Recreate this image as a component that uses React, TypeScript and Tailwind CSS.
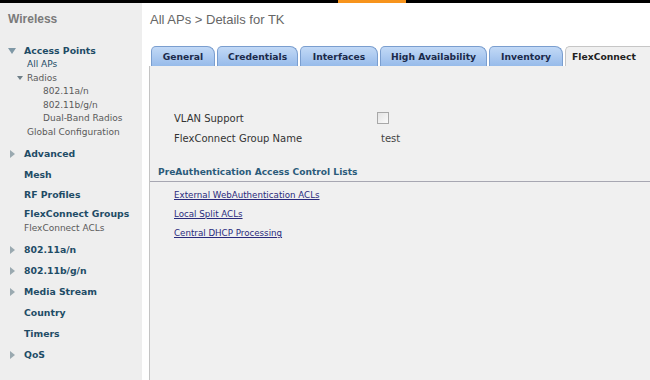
import { ReactNode } from "react"

const verdana = { fontFamily: '"DejaVu Sans", Verdana, sans-serif' }
const arial = { fontFamily: '"Liberation Sans", Arial, sans-serif' }

function Down({ small }: { small?: boolean }) {
  return small ? (
    <svg width="6" height="4" viewBox="0 0 6 4" className="shrink-0">
      <path d="M0 0 H6 L3 4 Z" fill="#6f7f88" />
    </svg>
  ) : (
    <svg width="8" height="6" viewBox="0 0 8 6" className="shrink-0">
      <path d="M0 0 H8 L4 6 Z" fill="#7f98a6" />
    </svg>
  )
}

function Right() {
  return (
    <svg width="5" height="8" viewBox="0 0 5 8" className="shrink-0">
      <path d="M0 0 L5 4 L0 8 Z" fill="#9aa9b0" />
    </svg>
  )
}

function NavBold({ children, arrow, h }: { children: ReactNode; arrow?: boolean; h: string }) {
  return (
    <div className={`flex items-center ${h}`}>
      <div className="flex w-[24px] justify-start pl-[10px]">{arrow && <Right />}</div>
      <span className="text-[9.3px] font-bold text-[#1e4c66]">{children}</span>
    </div>
  )
}

function NavSmall({ children, pl, color = "text-[#5a5a5a]" }: { children: ReactNode; pl: string; color?: string }) {
  return (
    <div className={`flex h-[13.5px] items-center ${pl}`}>
      <span className={`text-[9px] ${color}`}>{children}</span>
    </div>
  )
}

function Sidebar() {
  return (
    <aside className="flex w-[142px] shrink-0 flex-col bg-[#eeeeee] pt-[6px]" style={verdana}>
      <div className="flex h-[20px] items-center pl-[8px]">
        <span className="text-[12px] font-bold text-[#7a7a7a]" style={arial}>
          Wireless
        </span>
      </div>
      <div className="mt-[15px] flex h-[14px] items-center">
        <div className="flex w-[24px] pl-[8px]">
          <Down />
        </div>
        <span className="text-[9.3px] font-bold text-[#1e4c66]">Access Points</span>
      </div>
      <NavSmall pl="pl-[27px]" color="text-[#1e4c66]">
        All APs
      </NavSmall>
      <div className="flex h-[13.5px] items-center pl-[17px]">
        <Down small />
        <span className="ml-[4px] text-[9px] text-[#5a5a5a]">Radios</span>
      </div>
      <NavSmall pl="pl-[43px]">802.11a/n</NavSmall>
      <NavSmall pl="pl-[43px]">802.11b/g/n</NavSmall>
      <NavSmall pl="pl-[43px]">Dual-Band Radios</NavSmall>
      <NavSmall pl="pl-[27px]">Global Configuration</NavSmall>

      <div className="mt-[5px]" />
      <NavBold arrow h="h-[20.5px]">Advanced</NavBold>
      <NavBold h="h-[20.5px]">Mesh</NavBold>
      <NavBold h="h-[20.5px]">RF Profiles</NavBold>
      <NavBold h="h-[17.5px]">FlexConnect Groups</NavBold>
      <div className="flex h-[12px] items-center pl-[24px]">
        <span className="text-[9px] text-[#5a5a5a]">FlexConnect ACLs</span>
      </div>
      <div className="mt-[4px]" />
      <NavBold arrow h="h-[21px]">802.11a/n</NavBold>
      <NavBold arrow h="h-[21px]">802.11b/g/n</NavBold>
      <NavBold arrow h="h-[21px]">Media Stream</NavBold>
      <NavBold h="h-[21px]">Country</NavBold>
      <NavBold h="h-[21px]">Timers</NavBold>
      <NavBold arrow h="h-[21px]">QoS</NavBold>
    </aside>
  )
}

const tabs = [
  { label: "General", w: "w-[64px]" },
  { label: "Credentials", w: "w-[81px]" },
  { label: "Interfaces", w: "w-[78px]" },
  { label: "High Availability", w: "w-[107px]" },
  { label: "Inventory", w: "w-[74px]" },
]

function Tabs() {
  return (
    <div className="flex h-[20px] items-end gap-[2px] pl-[9px]" style={verdana}>
      {tabs.map((t) => (
        <div
          key={t.label}
          className={`flex h-[20px] ${t.w} items-center justify-center rounded-tl-[5px] rounded-tr-[8px] border border-b-0 border-[#7a9ecf] bg-gradient-to-b from-[#c2d9f6] to-[#97bbea] text-[9.2px] font-bold text-[#1b2a4a]`}
        >
          {t.label}
        </div>
      ))}
      <div className="flex h-[20px] flex-1 items-center justify-center rounded-tl-[5px] border border-b-0 border-r-0 border-[#c6c6c6] bg-[#f0f0f0] pr-[8px] text-[9.2px] font-bold text-[#222]">
        FlexConnect
      </div>
    </div>
  )
}

function Panel() {
  return (
    <div className="ml-[7px] flex flex-1 flex-col border-l border-[#c4c4c4] bg-[#f0f0f0]" style={verdana}>
      <div className="mt-[45px] flex h-[14px] items-center pl-[24px]">
        <span className="w-[203px] text-[10px] text-[#333]">VLAN Support</span>
        <span className="h-[12px] w-[12px] border border-[#a8a8a8] bg-gradient-to-br from-[#e4e4e4] to-[#fbfbfb]" />
      </div>
      <div className="mt-[6px] flex h-[14px] items-center pl-[24px]">
        <span className="w-[207px] text-[10px] text-[#333]">FlexConnect Group Name</span>
        <span className="text-[10px] text-[#444]">test</span>
      </div>
      <div className="mt-[21px] flex h-[14px] items-center pl-[8px]">
        <span className="text-[9.1px] font-bold text-[#2b5b7a]">PreAuthentication Access Control Lists</span>
      </div>
      <div className="mt-[1px] h-px bg-[#a7a7b2]" />
      <div className="flex flex-col pl-[24px] pt-[4px]">
        {["External WebAuthentication ACLs", "Local Split ACLs", "Central DHCP Processing"].map((l) => (
          <div key={l} className="flex h-[19px] items-center">
            <a href="#" className="text-[8.7px] text-[#2a2a7c] underline">
              {l}
            </a>
          </div>
        ))}
      </div>
    </div>
  )
}

export default function App() {
  return (
    <div className="flex h-[380px] w-[650px] flex-col overflow-hidden bg-white">
      <div className="flex h-[3px] shrink-0 bg-black">
        <div className="ml-[338px] h-[3px] w-[68px] bg-[#f7941d]" />
      </div>
      <div className="flex flex-1">
        <Sidebar />
        <main className="flex flex-1 flex-col bg-white">
          <div className="flex h-[43px] items-center pb-[10px] pl-[8px]">
            <h1 className="text-[13px] text-[#666]" style={arial}>
              All APs &gt; Details for TK
            </h1>
          </div>
          <Tabs />
          <Panel />
        </main>
      </div>
    </div>
  )
}
